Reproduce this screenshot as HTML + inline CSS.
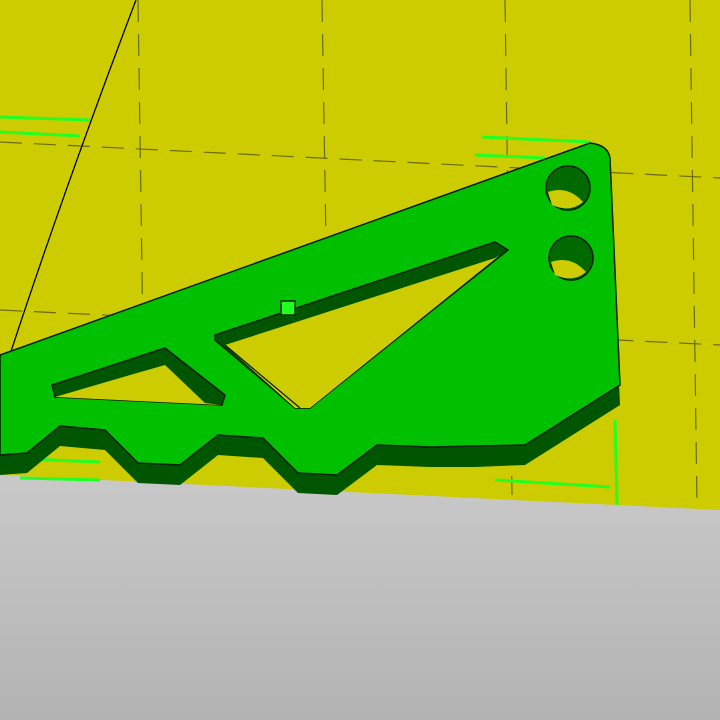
<html><body style="margin:0;width:720px;height:720px;overflow:hidden;background:#cccc00">
<svg width="720" height="720" viewBox="0 0 720 720" xmlns="http://www.w3.org/2000/svg">
<defs><linearGradient id="g" x1="0" y1="0" x2="0" y2="1"><stop offset="0" stop-color="#c9c9c9"/><stop offset="1" stop-color="#b3b3b3"/></linearGradient></defs>
<rect width="720" height="720" fill="#cccc00"/>
<g stroke="#6b6b10" stroke-width="1.2" stroke-dasharray="22 12" fill="none">
<path d="M0 142 L720 178"/><path d="M0 310 L720 345"/>
<path d="M138 0 L145 475"/><path d="M322 0 L330 485"/><path d="M505 0 L512 495"/><path d="M690 0 L697 505"/>
</g>
<path d="M0 475 L720 510 L720 720 L0 720Z" fill="url(#g)"/>
<path d="M136 0 Q60 200 0 385" stroke="#000" stroke-width="1.3" fill="none"/>
<g stroke="#22ff22" stroke-width="3" fill="none">
<path d="M0 117 L90 120"/><path d="M0 132 L80 136"/>
<path d="M482 137 L590 142"/><path d="M475 155 L545 158"/>
<path d="M495 480 L610 487"/><path d="M615 420 L617 505"/><path d="M0 458 L100 462"/><path d="M20 478 L100 480"/>
</g>
<path d="M0 375 L590 163 Q610 165 610 175 L620 405 L525 465 L475 467 L430 467 L377 465 L337 495 L298 493 L263 458 L218 455 L180 485 L138 483 L105 450 L60 446 L27 473 L0 475Z" fill="#005500"/>
<path d="M0 355 L590 143 Q608 145 610 158 L620 385 L525 445 L430 447 L377 445 L337 475 L298 473 L263 438 L218 435 L180 465 L138 463 L105 430 L60 426 L27 453 L0 455Z" fill="#00c000" stroke="#002000" stroke-width="1.5"/>
<path d="M52 385 L165 348 L225 395 L222 405 L55 397Z" fill="#005500" stroke="#002000" stroke-width="1.5"/>
<path d="M55 397 L130 375 L165 365 L205 403 L222 405Z" fill="#cccc00"/>
<path d="M215 335 L495 242 L508 250 L310 408 L295 408 L215 340Z" fill="#005500" stroke="#002000" stroke-width="1.5"/>
<path d="M225 345 L495 258 L500 255 L310 408 L295 408Z" fill="#cccc00"/>
<path d="M225 345 L300 408" stroke="#002000" stroke-width="1.2"/>
<circle cx="568" cy="188" r="22" fill="#006a00" stroke="#002000" stroke-width="1.5"/>
<path d="M548 192 Q568 185 583 202 Q570 213 552 205Z" fill="#cccc00"/>
<circle cx="571" cy="258" r="22" fill="#006a00" stroke="#002000" stroke-width="1.5"/>
<path d="M551 262 Q571 255 586 272 Q573 283 555 275Z" fill="#cccc00"/>
<rect x="281" y="301" width="14" height="14" fill="#22ff22" stroke="#003000" stroke-width="1.5"/>
</svg></body></html>
